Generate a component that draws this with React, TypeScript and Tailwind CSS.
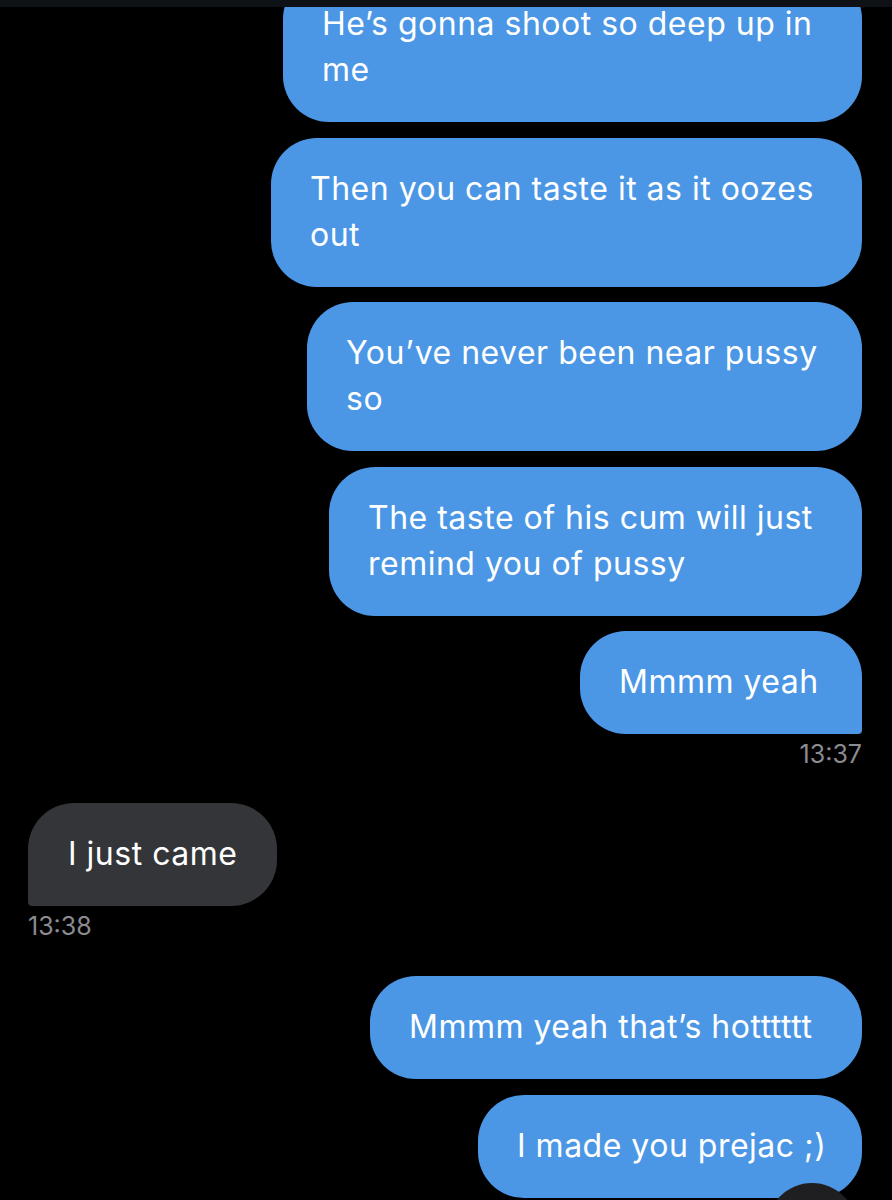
import React from "react";

type Msg = { text: React.ReactNode; width: number; last?: boolean; single?: boolean };

const sentTop: Msg[] = [
  { text: "He’s gonna shoot so deep up in me", width: 579 },
  { text: "Then you can taste it as it oozes out", width: 591 },
  { text: "You’ve never been near pussy so", width: 555 },
  { text: "The taste of his cum will just remind you of pussy", width: 533 },
  { text: "Mmmm yeah", width: 282, last: true, single: true },
];

const sentBottom: Msg[] = [
  { text: "Mmmm yeah that’s hotttttt", width: 492, single: true },
  { text: "I made you prejac ;)", width: 384, single: true },
];

function Sent({ msg }: { msg: Msg }) {
  return (
    <div
      style={{ width: msg.width }}
      className={`bg-[#4b97e5] text-white px-[39px] pt-[28px] pb-[29px] text-[32px] leading-[46px] rounded-[46px] ${
        msg.last ? "rounded-br-[4px]" : ""
      } ${msg.single ? "whitespace-nowrap" : ""}`}
    >
      {msg.text}
    </div>
  );
}

export default function App() {
  return (
    <div className="relative w-[892px] h-[1200px] overflow-hidden bg-black font-['Inter','Liberation_Sans',sans-serif] tracking-[0.5px]">
      {/* status strip */}
      <div className="absolute top-0 left-0 right-0 h-[7px] bg-[#0e1217] z-10" />

      <div className="flex flex-col pl-[28px] pr-[30px]">
        {/* first group */}
        <div className="flex flex-col items-end gap-[15.5px] -mt-[27px]">
          {sentTop.map((m, i) => (
            <Sent key={i} msg={m} />
          ))}
        </div>
        <div className="self-end mt-[6px] text-[25px] leading-[28px] tracking-normal text-[#8b8b90]">13:37</div>

        {/* received */}
        <div className="mt-[35px] self-start w-[249px] whitespace-nowrap bg-[#343539] text-white px-[40px] pt-[28px] pb-[29px] text-[32px] leading-[46px] rounded-[46px] rounded-bl-[4px]">
          I just came
        </div>
        <div className="self-start mt-[6px] text-[25px] leading-[28px] tracking-normal text-[#8b8b90]">13:38</div>

        {/* second group */}
        <div className="flex flex-col items-end gap-[15.5px] mt-[36px]">
          {sentBottom.map((m, i) => (
            <Sent key={i} msg={m} />
          ))}
        </div>
      </div>

      {/* scroll-down button, cut off by the screenshot edge */}
      <div className="absolute left-[767px] top-[1183px] w-[90px] h-[90px] rounded-full bg-[#1f1f21]" />
    </div>
  );
}
